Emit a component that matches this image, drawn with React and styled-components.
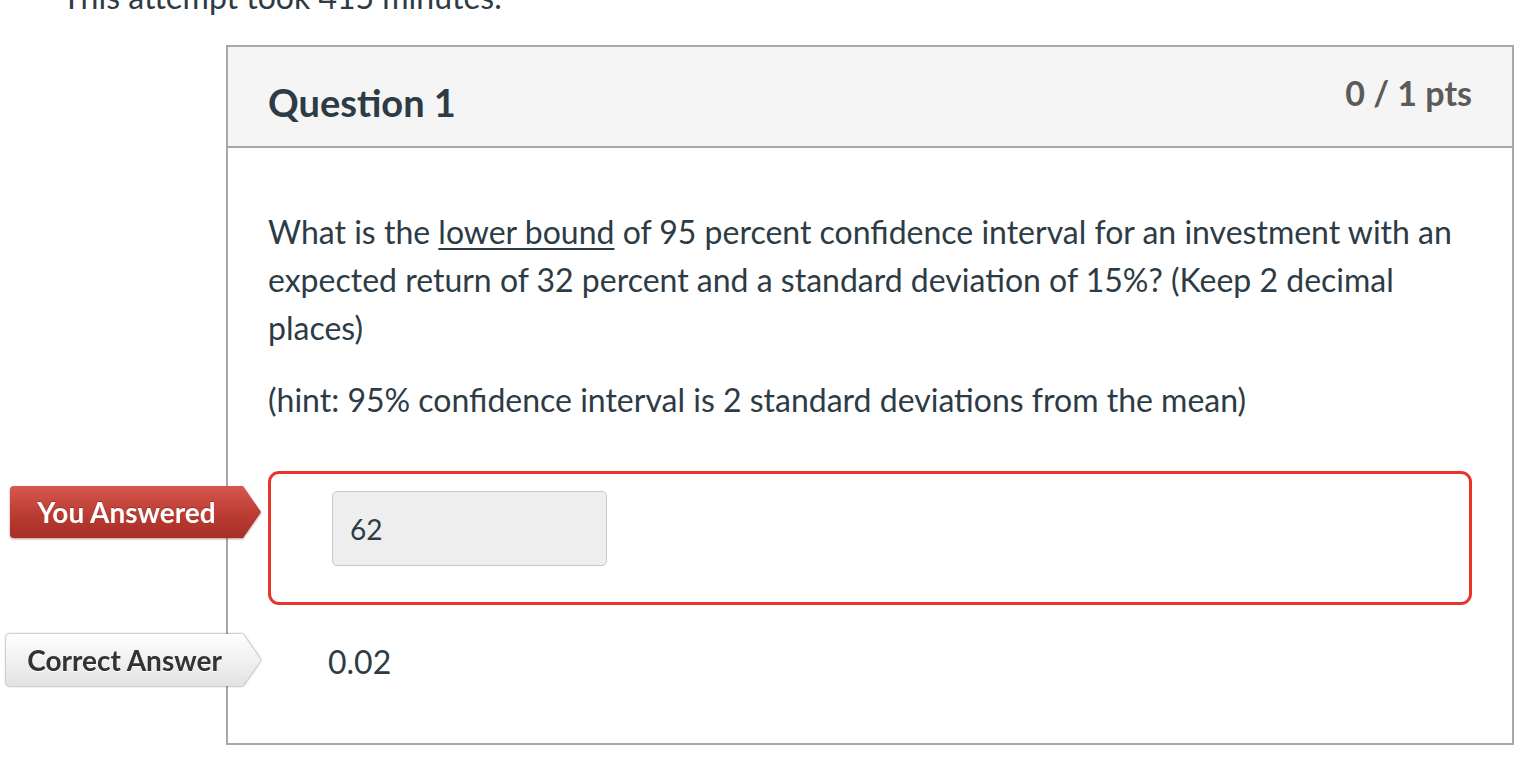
import React from 'react'
import styled, { createGlobalStyle } from 'styled-components'

const GlobalStyle = createGlobalStyle`
  html, body {
    margin: 0;
    padding: 0;
    background: #fff;
  }
  body {
    font-family: Lato, "Noto Sans", sans-serif;
    color: #2d3b45;
    overflow: hidden;
  }
`

const Page = styled.div`
  padding-left: 62px;
  width: 1538px;
  height: 784px;
  box-sizing: border-box;
  overflow: hidden;
`

const AttemptNote = styled.div`
  margin-top: -27px;
  font-size: 32px;
  line-height: 48px;
`

const Card = styled.div`
  margin: 24px 0 0 164px;
  width: 1288px;
  box-sizing: border-box;
  border: 2px solid #a8a8a8;
  background: #fff;
`

const Header = styled.div`
  display: flex;
  justify-content: space-between;
  align-items: flex-start;
  height: 101px;
  box-sizing: border-box;
  padding: 33px 40px 0;
  background: #f5f5f5;
  border-bottom: 2px solid #a8a8a8;
`

const Title = styled.h2`
  margin: 0;
  font-size: 38px;
  line-height: 45px;
  font-weight: 700;
  color: #2d3b45;
`

const Points = styled.div`
  margin-top: -7px;
  font-size: 34px;
  line-height: 40px;
  font-weight: 700;
  color: #5b5b5b;
`

const Body = styled.div`
  padding: 60px 40px 36px;
`

const Text = styled.p`
  margin: 0 0 24px;
  font-size: 32px;
  line-height: 48px;

  &:last-of-type {
    margin-bottom: 0;
  }

  u {
    text-decoration-thickness: 2px;
    text-underline-offset: 4px;
  }
`

const Answers = styled.div`
  margin-top: 47px;
  display: flex;
  flex-direction: column;
  gap: 14px;
`

const Answer = styled.div`
  position: relative;
  border: 3px solid ${p => (p.$wrong ? '#e8352b' : 'transparent')};
  border-radius: 11px;
  padding: ${p => (p.$wrong ? '17px 61px 36px' : '17px 57px 20px')};
`

const Badge = styled.div`
  position: absolute;
  top: 12px;
  right: calc(100% + 10px);
  filter: ${p => (p.$tone === 'red'
    ? 'drop-shadow(0 1px 1px rgba(90, 20, 15, 0.45))'
    : 'drop-shadow(0 0 1px rgba(0, 0, 0, 0.55))')};
`

const BadgeShape = styled.div`
  width: ${p => p.$width}px;
  height: 52px;
  box-sizing: border-box;
  padding-right: 18px;
  display: flex;
  align-items: center;
  justify-content: center;
  border-radius: 4px 0 0 4px;
  clip-path: polygon(0 0, calc(100% - 18px) 0, 100% 50%, calc(100% - 18px) 100%, 0 100%);
  font-size: 28px;
  font-weight: 700;
  ${p => (p.$tone === 'red'
    ? `
    color: #fff;
    background: linear-gradient(#d8574e, #b83a31 60%, #a62f27);
    text-shadow: 0 -1px 0 rgba(0, 0, 0, 0.25);
  `
    : `
    color: #333;
    background: linear-gradient(#ffffff, #f1f1f1 50%, #e2e2e2);
    text-shadow: 0 1px 0 #fff;
  `)}
`

const AnswerInput = styled.div`
  width: 275px;
  height: 75px;
  box-sizing: border-box;
  padding-left: 17px;
  display: flex;
  align-items: center;
  background: #eeeeee;
  border: 1px solid #c9c9c9;
  border-radius: 5px;
  font-size: 28px;
  color: #2d3b45;
`

const AnswerValue = styled.div`
  font-size: 32px;
  line-height: 45px;
  color: #2d3b45;
`

export default function App () {
  return (
    <Page>
      <GlobalStyle />
      <AttemptNote>This attempt took 415 minutes.</AttemptNote>
      <Card>
        <Header>
          <Title>Question 1</Title>
          <Points>0 / 1 pts</Points>
        </Header>
        <Body>
          <Text>
            What is the <u>lower bound</u> of 95 percent confidence interval for an investment with an expected return of 32 percent and a standard deviation of 15%? (Keep 2 decimal places)
          </Text>
          <Text>(hint: 95% confidence interval is 2 standard deviations from the mean)</Text>
          <Answers>
            <Answer $wrong>
              <Badge $tone="red">
                <BadgeShape $tone="red" $width={251}>You Answered</BadgeShape>
              </Badge>
              <AnswerInput>62</AnswerInput>
            </Answer>
            <Answer>
              <Badge $tone="grey">
                <BadgeShape $tone="grey" $width={255}>Correct Answer</BadgeShape>
              </Badge>
              <AnswerValue>0.02</AnswerValue>
            </Answer>
          </Answers>
        </Body>
      </Card>
    </Page>
  )
}
